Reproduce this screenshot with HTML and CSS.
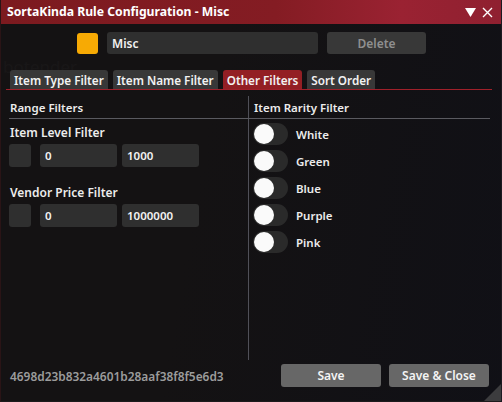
FILE: index.html
```html
<!DOCTYPE html>
<html>
<head>
<meta charset="utf-8">
<link rel="stylesheet" href="styles.css">
</head>
<body>
<div class="ghost">botender</div>
<div class="window">
  <div class="titlebar">
    <span class="title">SortaKinda Rule Configuration - Misc</span>
    <span class="controls">
      <svg width="11" height="9" viewBox="0 0 11 9"><path d="M0 0 H11 L5.5 9 Z" fill="#fff"/></svg>
      <svg width="11" height="11" viewBox="0 0 11 11"><path d="M1 1 L10 10 M10 1 L1 10" stroke="#fff" stroke-width="1.4"/></svg>
    </span>
  </div>
  <div class="content">
    <div class="toprow">
      <div class="swatch"></div>
      <div class="field name">Misc</div>
      <div class="btn disabled">Delete</div>
    </div>
    <div class="tabs">
      <div class="tab">Item Type Filter</div>
      <div class="tab">Item Name Filter</div>
      <div class="tab active">Other Filters</div>
      <div class="tab">Sort Order</div>
    </div>
    <div class="columns">
      <div class="col left">
        <div class="colhead">Range Filters</div>
        <div class="label">Item Level Filter</div>
        <div class="range">
          <div class="check"></div>
          <div class="field num">0</div>
          <div class="field num">1000</div>
        </div>
        <div class="label spaced">Vendor Price Filter</div>
        <div class="range">
          <div class="check"></div>
          <div class="field num">0</div>
          <div class="field num">1000000</div>
        </div>
      </div>
      <div class="col right">
        <div class="colhead">Item Rarity Filter</div>
        <div class="toggles">
          <div class="trow"><span class="toggle"><span class="knob"></span></span><span>White</span></div>
          <div class="trow"><span class="toggle"><span class="knob"></span></span><span>Green</span></div>
          <div class="trow"><span class="toggle"><span class="knob"></span></span><span>Blue</span></div>
          <div class="trow"><span class="toggle"><span class="knob"></span></span><span>Purple</span></div>
          <div class="trow"><span class="toggle"><span class="knob"></span></span><span>Pink</span></div>
        </div>
      </div>
    </div>
    <div class="footer">
      <span class="hash">4698d23b832a4601b28aaf38f8f5e6d3</span>
      <div class="buttons">
        <div class="btn big">Save</div>
        <div class="btn big">Save &amp; Close</div>
      </div>
    </div>
  </div>
  <div class="grip"></div>
</div>
</body>
</html>
```

FILE: styles.css
```css
* { box-sizing: border-box; }
html, body { margin: 0; padding: 0; }
body {
  width: 502px;
  height: 402px;
  overflow: hidden;
  background: #141213;
  font-family: "Noto Sans", "Open Sans", sans-serif;
  font-weight: 600;
  font-size: 11.5px;
  color: #ececec;
  position: relative;
}
.ghost {
  position: absolute;
  left: 3px;
  top: 55px;
  font-size: 17px;
  font-weight: 400;
  color: #3a3839;
  z-index: 0;
}
.window {
  position: relative;
  z-index: 1;
  width: 502px;
  height: 402px;
  display: flex;
  flex-direction: column;
  background: linear-gradient(100deg, rgba(20,18,19,0.88) 40%, rgba(16,16,22,0.95) 100%);
  border-left: 1px solid #2a1416;
  border-right: 1px solid #1c1a22;
  border-bottom: 1px solid #1c1a1c;
}
.titlebar {
  height: 24px;
  flex: none;
  display: flex;
  align-items: center;
  justify-content: space-between;
  padding: 0 8px 0 6px;
  background: linear-gradient(90deg, #7c1a1f 0%, #841c23 55%, #9a2232 80%, #8f2030 100%);
  color: #fff;
  font-size: 12.2px;
  font-weight: 700;
}
.title { margin-top: -1px; }
.controls { display: flex; align-items: center; gap: 6px; }
.content {
  flex: 1;
  display: flex;
  flex-direction: column;
  padding: 8px 4px 0 8px;
}
.toprow {
  display: flex;
  align-items: center;
  height: 22px;
  padding-left: 68px;
  gap: 9px;
}
.swatch {
  width: 21px;
  height: 21px;
  border-radius: 3px;
  background: #f7aa04;
}
.field {
  background: #2f2f2f;
  border-radius: 3px;
  height: 22px;
  display: flex;
  align-items: center;
  padding-left: 5px;
  color: #f2f2f2;
}
.name { width: 211px; font-size: 12px; }
.btn {
  display: flex;
  align-items: center;
  justify-content: center;
  border-radius: 3px;
}
.disabled {
  width: 99px;
  height: 22px;
  background: #383838;
  color: #8f8f8f;
  font-size: 12px;
}
.tabs {
  margin-top: 16px;
  display: flex;
  gap: 5px;
  border-bottom: 1px solid #a0202a;
  margin-right: 5px;
  margin-left: -3px;
  padding-left: 4px;
}
.tab {
  height: 19px;
  padding: 0 4px;
  background: #383838;
  border-radius: 3px 3px 0 0;
  display: flex;
  align-items: center;
  font-size: 11.7px;
  color: #f2f2f2;
}
.tab.active { background: #931f24; }
.columns {
  display: grid;
  grid-template-columns: 240px 241px;
  height: 264px;
  margin-top: 6px;
}
.col { display: flex; flex-direction: column; }
.left { border-right: 1px solid #505058; }
.right { padding-left: 4px; }
.colhead {
  height: 23px;
  border-bottom: 1px solid #5a5a60;
  display: flex;
  align-items: center;
  padding-left: 1px;
  padding-top: 1px;
}
.left .colhead { margin-right: -4px; }
.right .colhead { margin-left: -4px; padding-left: 5px; }
.label {
  margin-top: 5px;
  height: 17px;
  display: flex;
  align-items: center;
  padding-left: 1px;
  font-size: 12px;
}
.label.spaced { margin-top: 17px; }
.range {
  margin-top: 3px;
  display: flex;
  gap: 9px;
}
.check {
  width: 22px;
  height: 23px;
  background: #2f2f2f;
  border-radius: 3px;
}
.num { width: 77px; height: 23px; }
.num + .num { margin-left: -4px; }
.toggles {
  margin-top: 4px;
  display: flex;
  flex-direction: column;
  gap: 5px;
}
.trow {
  display: flex;
  align-items: center;
  gap: 8px;
  height: 22px;
}
.toggle {
  width: 35px;
  height: 22px;
  border-radius: 11px;
  background: #2a2a2a;
  display: flex;
  align-items: center;
  padding-left: 1px;
}
.knob {
  width: 20px;
  height: 20px;
  border-radius: 50%;
  background: #fafafa;
}
.footer {
  display: flex;
  align-items: center;
  justify-content: space-between;
  height: 23px;
  margin-top: 4px;
  padding-right: 8px;
}
.hash { color: #9c9c9c; font-size: 11.9px; padding-left: 1px; }
.buttons { display: flex; gap: 8px; }
.big {
  width: 100px;
  height: 23px;
  background: #676767;
  color: #f4f4f4;
  font-size: 12px;
}
.grip {
  position: absolute;
  right: 0;
  bottom: 0;
  width: 0;
  height: 0;
  border-left: 17px solid transparent;
  border-bottom: 17px solid #3c3c3e;
}
```
